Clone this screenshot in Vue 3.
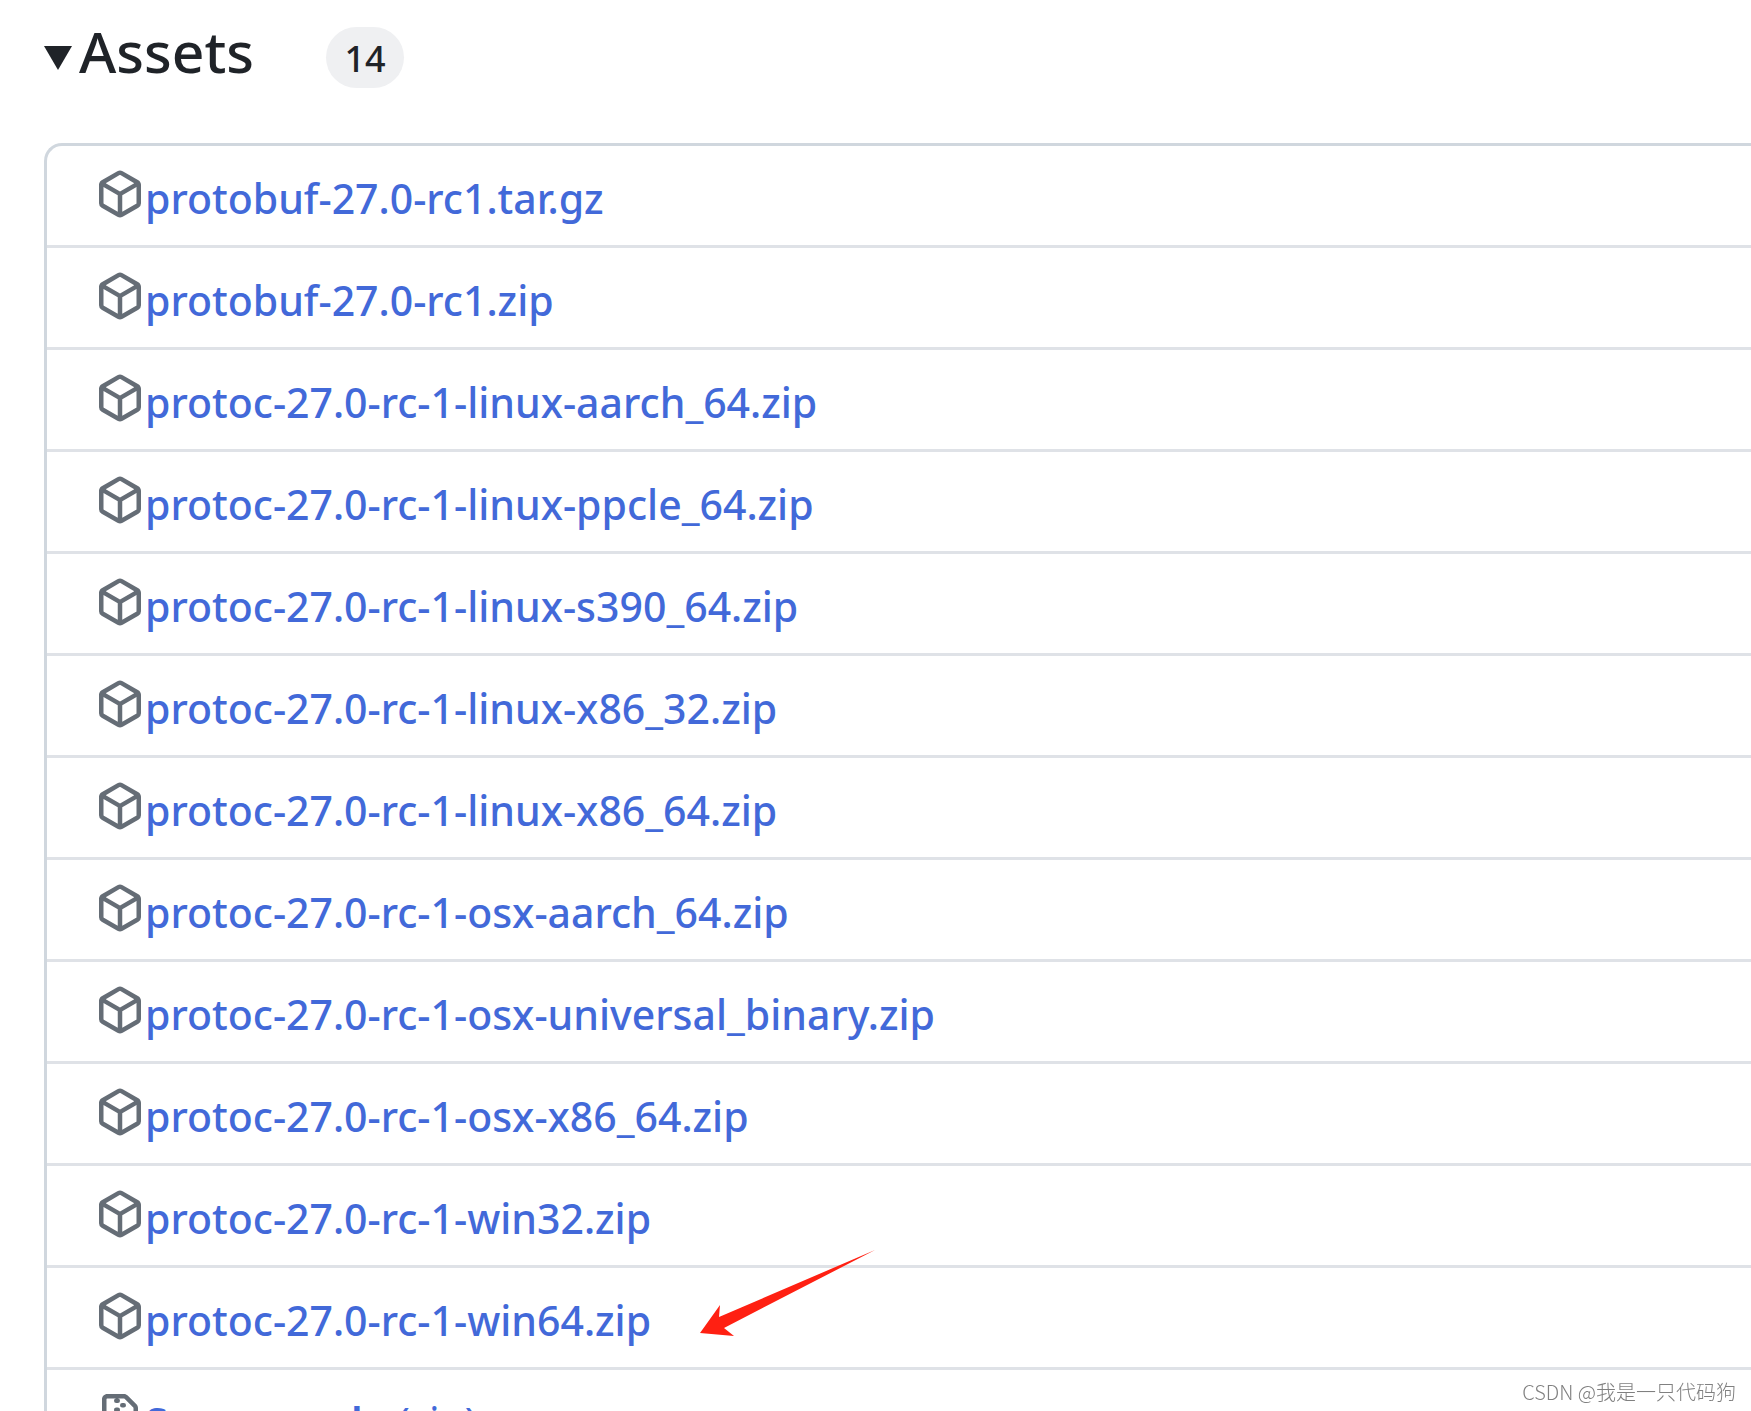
<script setup>
const packagePath =
  'm8.878.392 5.25 3.045c.54.314.872.89.872 1.514v6.098a1.75 1.75 0 0 1-.872 1.514l-5.25 3.045a1.75 1.75 0 0 1-1.756 0l-5.25-3.045A1.75 1.75 0 0 1 1 11.049V4.951c0-.624.332-1.201.872-1.514L7.122.392a1.75 1.75 0 0 1 1.756 0ZM7.875 1.69l-4.63 2.685L8 7.133l4.755-2.758-4.63-2.685a.248.248 0 0 0-.25 0ZM2.5 5.677v5.372c0 .09.047.171.125.216l4.625 2.683V8.432Zm6.25 8.271 4.625-2.683a.25.25 0 0 0 .125-.216V5.677L8.75 8.432Z'
const zipPath =
  'M3.5 1.75v11.5c0 .09.048.173.126.217a.75.75 0 0 1-.752 1.298A1.748 1.748 0 0 1 2 13.25V1.75C2 .784 2.784 0 3.75 0h5.586c.464 0 .909.185 1.237.513l2.914 2.914c.329.328.513.773.513 1.237v8.586A1.75 1.75 0 0 1 12.25 15h-.5a.75.75 0 0 1 0-1.5h.5a.25.25 0 0 0 .25-.25V4.664a.25.25 0 0 0-.073-.177L9.513 1.573a.25.25 0 0 0-.177-.073H7.25a.75.75 0 0 1 0 1.5h-.5a.75.75 0 0 1 0-1.5h-3a.25.25 0 0 0-.25.25Zm3.75 8.75h.5c.966 0 1.75.784 1.75 1.75v3a.75.75 0 0 1-.75.75h-2.5a.75.75 0 0 1-.75-.75v-3c0-.966.784-1.75 1.75-1.75ZM6 5.25a.75.75 0 0 1 .75-.75h.5a.75.75 0 0 1 0 1.5h-.5A.75.75 0 0 1 6 5.25Zm.75 2.25h.5a.75.75 0 0 1 0 1.5h-.5a.75.75 0 0 1 0-1.5ZM8 6.75A.75.75 0 0 1 8.75 6h.5a.75.75 0 0 1 0 1.5h-.5A.75.75 0 0 1 8 6.75ZM8.75 3h.5a.75.75 0 0 1 0 1.5h-.5a.75.75 0 0 1 0-1.5ZM8 9.75A.75.75 0 0 1 8.75 9h.5a.75.75 0 0 1 0 1.5h-.5A.75.75 0 0 1 8 9.75Zm-1 2.5v2.25h1v-2.25a.25.25 0 0 0-.25-.25h-.5a.25.25 0 0 0-.25.25Z'

const assets = [
  { name: 'protobuf-27.0-rc1.tar.gz' },
  { name: 'protobuf-27.0-rc1.zip' },
  { name: 'protoc-27.0-rc-1-linux-aarch_64.zip' },
  { name: 'protoc-27.0-rc-1-linux-ppcle_64.zip' },
  { name: 'protoc-27.0-rc-1-linux-s390_64.zip' },
  { name: 'protoc-27.0-rc-1-linux-x86_32.zip' },
  { name: 'protoc-27.0-rc-1-linux-x86_64.zip' },
  { name: 'protoc-27.0-rc-1-osx-aarch_64.zip' },
  { name: 'protoc-27.0-rc-1-osx-universal_binary.zip' },
  { name: 'protoc-27.0-rc-1-osx-x86_64.zip' },
  { name: 'protoc-27.0-rc-1-win32.zip' },
  { name: 'protoc-27.0-rc-1-win64.zip', marked: true },
  { name: 'Source code', format: '(zip)', source: true },
]
</script>

<template>
  <main class="page">
    <details class="assets" open>
      <summary class="summary">
        <svg class="caret" viewBox="0 0 28 24" aria-hidden="true"><path d="M0 0h28L14 24z" /></svg>
        <h3 class="title">Assets</h3>
        <span class="counter">14</span>
      </summary>
      <ul class="list">
        <li v-for="asset in assets" :key="asset.name" class="row">
          <svg class="icon" viewBox="0 0 16 16" aria-hidden="true">
            <path :d="asset.source ? zipPath : packagePath" />
          </svg>
          <a class="link" :class="{ source: asset.source }" href="#">
            <span>{{ asset.name }}</span>
            <span v-if="asset.format" class="format">&nbsp;{{ asset.format }}</span>
          </a>
          <svg v-if="asset.marked" class="arrow" viewBox="0 0 175 87" aria-hidden="true">
            <path d="M0 83 20 55 19 67 175 0 24 78 34 86z" />
          </svg>
        </li>
      </ul>
    </details>
    <div class="watermark">CSDN @我是一只代码狗</div>
  </main>
</template>

<style>
html,
body {
  background: #fff;
}
</style>

<style scoped>
.page {
  height: 100vh;
  overflow: hidden;
  padding-left: 44px;
  box-sizing: border-box;
  font-family: 'Noto Sans', 'Open Sans', sans-serif;
  color: #1f2328;
}
.summary {
  display: flex;
  align-items: center;
  padding: 12px 0 41px;
  list-style: none;
}
.caret {
  width: 28px;
  height: 24px;
  margin-top: 2px;
  fill: #1f2328;
}
.title {
  margin: 0 72px 0 7px;
  padding-bottom: 12px;
  font-size: 57px;
  font-weight: 500;
  line-height: 78px;
}
.counter {
  box-sizing: border-box;
  width: 78px;
  height: 61px;
  border-radius: 31px;
  background: #eff0f2;
  text-align: center;
  font-size: 36px;
  font-weight: 500;
  line-height: 64px;
}
.list {
  margin: 0;
  padding: 0;
  list-style: none;
  border: 3px solid #d0d7de;
  border-right: 0;
  border-radius: 18px 0 0 0;
}
.row {
  position: relative;
  display: flex;
  align-items: flex-start;
  gap: 1px;
  height: 102px;
  padding: 24px 49px;
  box-sizing: border-box;
  border-bottom: 3px solid #dfe2e7;
}
.icon {
  flex: none;
  width: 48px;
  height: 48px;
  fill: #656d76;
}
.link {
  display: flex;
  font-size: 41px;
  font-weight: 500;
  line-height: 56px;
  white-space: nowrap;
  color: #4269d9;
  text-decoration: none;
}
.source {
  font-weight: 600;
}
.format {
  font-weight: 400;
}
.arrow {
  position: absolute;
  left: 653px;
  top: -18px;
  width: 175px;
  height: 87px;
  fill: #ff2012;
}
.watermark {
  position: fixed;
  right: 15px;
  bottom: 5px;
  font-family: 'Noto Sans CJK SC', sans-serif;
  font-size: 20px;
  font-weight: 300;
  line-height: 28px;
  color: #808080;
}
</style>
